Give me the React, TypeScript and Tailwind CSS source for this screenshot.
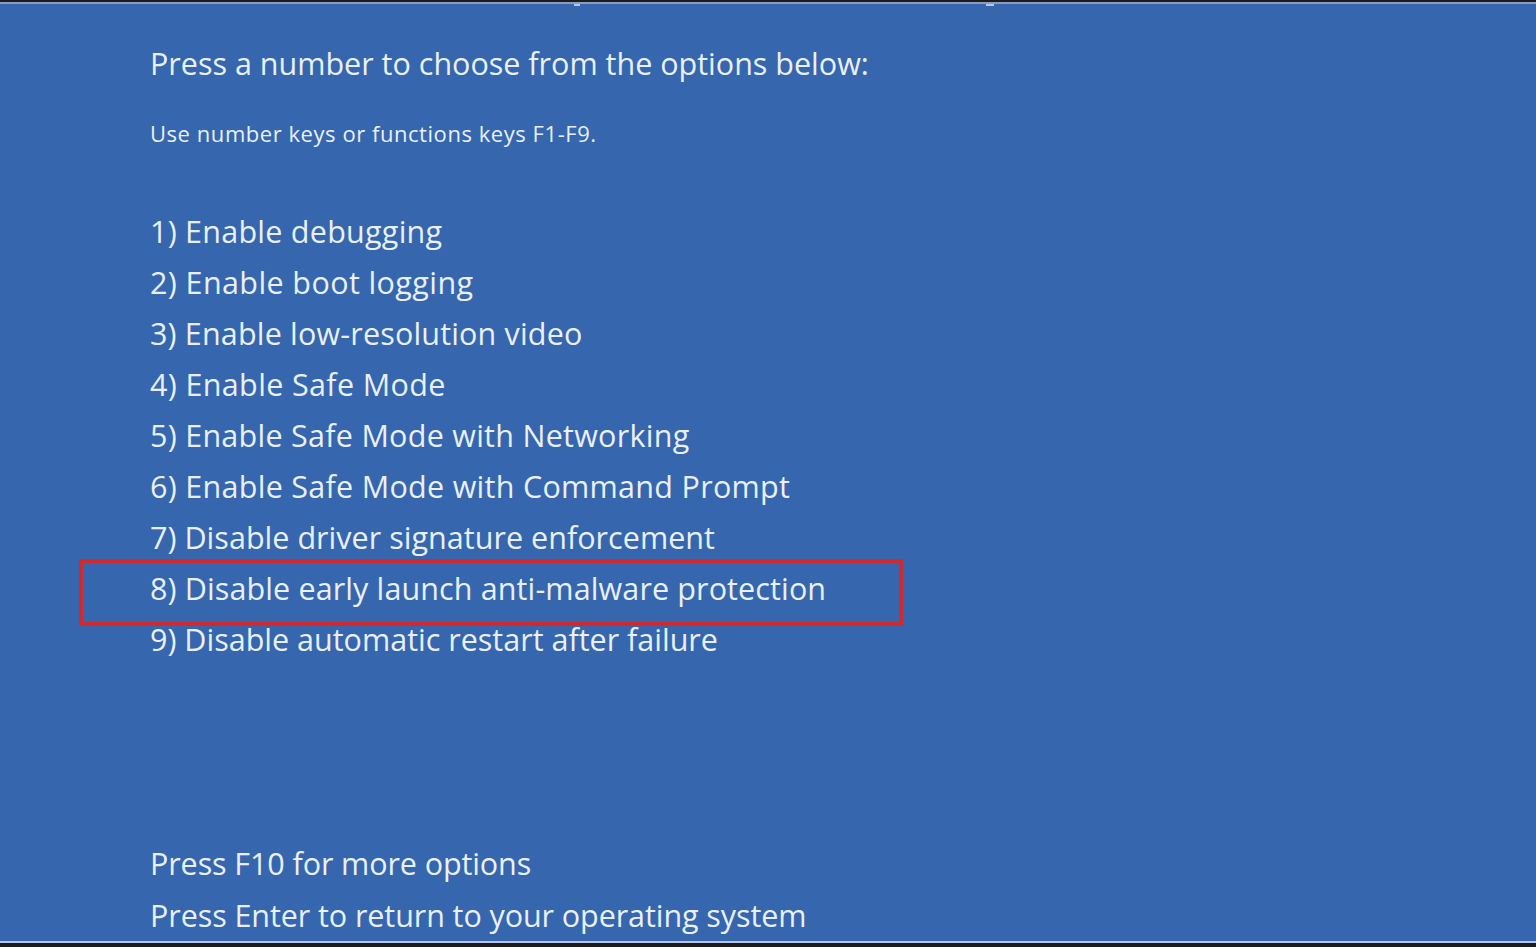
import React from "react";

const items: { t: string; c: string }[] = [
  { t: "1) Enable debugging", c: "tracking-[0.25px]" },
  { t: "2) Enable boot logging", c: "tracking-[0.4px]" },
  { t: "3) Enable low-resolution video", c: "tracking-[0.17px]" },
  { t: "4) Enable Safe Mode", c: "tracking-[0.36px]" },
  { t: "5) Enable Safe Mode with Networking", c: "tracking-[0.27px]" },
  { t: "6) Enable Safe Mode with Command Prompt", c: "tracking-[0.29px]" },
  { t: "7) Disable driver signature enforcement", c: "tracking-[0.03px]" },
  { t: "8) Disable early launch anti-malware protection", c: "tracking-[0.12px]" },
  { t: "9) Disable automatic restart after failure", c: "tracking-normal" },
];

export default function App() {
  return (
    <div
      className="relative w-full h-[947px] bg-[#3566ae] flex flex-col overflow-hidden text-[#eaf0fa]"
      style={{ fontFamily: '"Open Sans", "Noto Sans", sans-serif' }}
    >
      <div className="h-[2px] bg-[#1c1c1c]" />
      <div className="h-[2px] bg-[#8a9cc0]" />
      <div className="absolute left-[574px] top-[4px] w-[6px] h-[2px] bg-[#b8c8e6]" />
      <div className="absolute left-[986px] top-[4px] w-[8px] h-[2px] bg-[#b8c8e6]" />
      <div className="flex-1 flex flex-col pl-[150px]">
        <div className="mt-[39px] text-[30.5px] leading-[40px]">
          Press a number to choose from the options below:
        </div>
        <div className="mt-[35px] text-[22px] leading-[30px] tracking-[0.55px]">
          Use number keys or functions keys F1-F9.
        </div>
        <div className="mt-[58px] flex flex-col">
          {items.map((it, i) => (
            <div key={i} className={`relative text-[30.5px] leading-[51px] ${it.c}`}>
              {it.t}
              {i === 7 && (
                <div className="absolute left-[-71px] top-[-4px] w-[824px] h-[67px] border-[4px] border-[#d02a30]" />
              )}
            </div>
          ))}
        </div>
        <div className="mt-[172px] flex flex-col">
          <div className="text-[30.5px] leading-[52px] tracking-[-0.1px]">Press F10 for more options</div>
          <div className="text-[30.5px] leading-[52px] tracking-[-0.08px]">
            Press Enter to return to your operating system
          </div>
        </div>
      </div>
      <div className="h-[3px] bg-[#b7c4e4]" />
      <div className="h-[4px] bg-[#1c1c1c]" />
    </div>
  );
}
